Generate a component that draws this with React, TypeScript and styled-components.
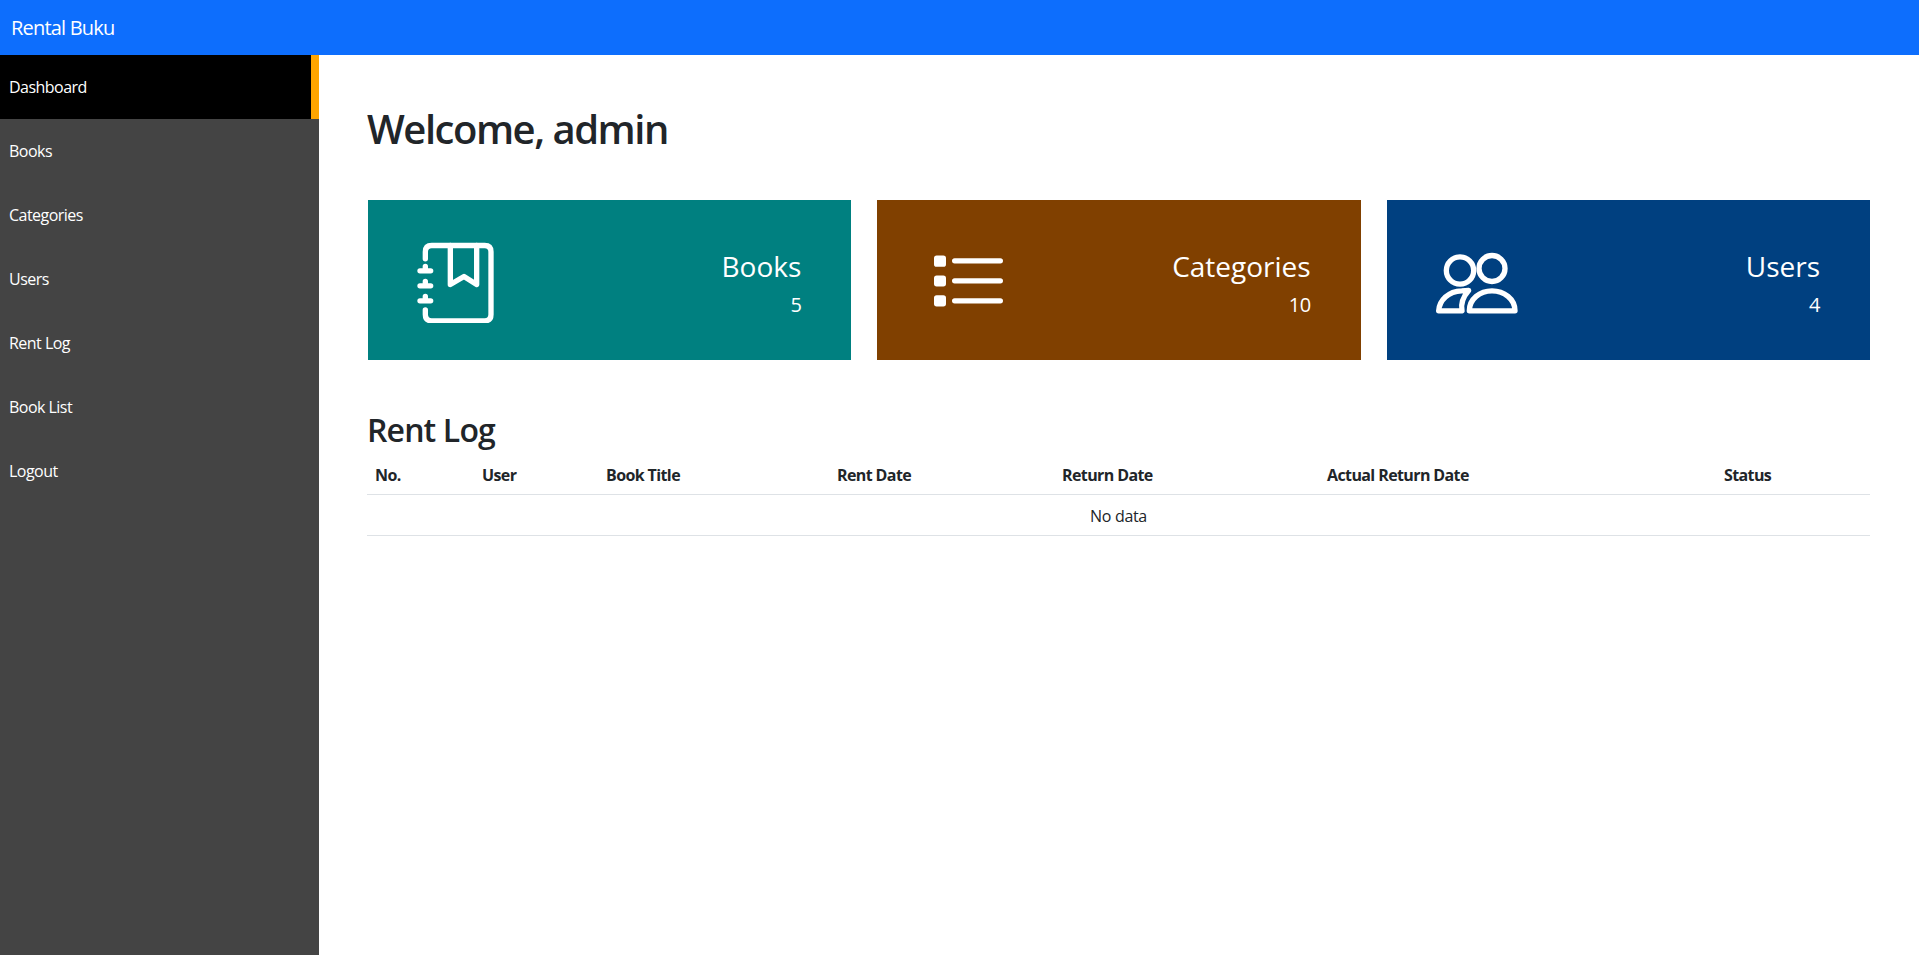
import React from "react";
import styled, { createGlobalStyle } from "styled-components";

const GlobalStyle = createGlobalStyle`
  html, body { margin: 0; padding: 0; background: #fff; }
  body {
    font-family: "Open Sans", "Noto Sans", "Liberation Sans", sans-serif;
    font-size: 16px;
    line-height: 1.5;
    color: #212529;
    letter-spacing: -0.033em;
  }
  * { box-sizing: border-box; }
`;

const Page = styled.div`
  display: flex;
  flex-direction: column;
  height: 955px;
  overflow: hidden;
`;

const Navbar = styled.header`
  flex: 0 0 55px;
  display: flex;
  align-items: center;
  padding-left: 11px;
  background: #0d6efd;
`;

const Brand = styled.a`
  font-size: 20px;
  letter-spacing: -0.04em;
  color: #fff;
`;

const Body = styled.div`
  flex: 1;
  display: flex;
  min-height: 0;
`;

const Sidebar = styled.nav`
  flex: 0 0 319px;
  background: #444444;
`;

const NavItem = styled.a<{ $active?: boolean }>`
  display: flex;
  align-items: center;
  height: 64px;
  padding-left: 9px;
  color: #fff;
  background: ${(p) => (p.$active ? "#000" : "transparent")};
  border-right: 8px solid ${(p) => (p.$active ? "orange" : "transparent")};
`;

const Main = styled.main`
  flex: 1;
  min-width: 0;
  padding: 50px 49px 0;
`;

const Title = styled.h1`
  margin: 0 0 47px -1px;
  font-size: 40px;
  line-height: 48px;
  font-weight: 600;
  letter-spacing: -0.037em;
`;

const Cards = styled.section`
  display: grid;
  grid-template-columns: repeat(3, 1fr);
  gap: 26px;
  margin-bottom: 51px;
`;

const Card = styled.article<{ $bg: string }>`
  display: flex;
  align-items: center;
  justify-content: space-between;
  height: 160px;
  padding: 0 50px 0 47px;
  color: #fff;
  background: ${(p) => p.$bg};
`;

const CardIcon = styled.svg`
  display: block;
  width: 85px;
  height: 85px;
  fill: none;
  stroke: #fff;
  stroke-width: 16;
  stroke-linecap: round;
  stroke-linejoin: round;
`;

const CardText = styled.div`
  padding-top: 5px;
  text-align: right;
`;

const CardTitle = styled.div`
  margin-bottom: 3px;
  font-size: 28px;
  line-height: 42px;
  letter-spacing: 0;
`;

const CardCount = styled.div`
  font-size: 20px;
  line-height: 30px;
`;

const SubTitle = styled.h2`
  margin: 0 0 5px -1px;
  font-size: 32px;
  line-height: 38.4px;
  font-weight: 600;
  letter-spacing: -0.027em;
`;

const Table = styled.table`
  width: calc(100% + 1px);
  margin-left: -1px;
  border-collapse: collapse;
  table-layout: fixed;
`;

const Col = styled.col<{ $w: number }>`
  width: ${(p) => p.$w}px;
`;

const Th = styled.th`
  padding: 9px 8px 7px;
  text-align: left;
  font-weight: 700;
  letter-spacing: -0.038em;
  border-bottom: 1px solid #dee2e6;
`;

const Td = styled.td`
  padding: 9px 8px 7px;
  text-align: center;
  letter-spacing: -0.02em;
  border-bottom: 1px solid #dee2e6;
`;

const BookIcon = () => (
  <CardIcon viewBox="165 142.5 255 255">
    <path d="M196 205 V184 Q196 165 215 165 H374 Q393 165 393 184 V372 Q393 391 374 391 H215 Q196 391 196 372 V358" />
    <path d="M271 165 V282 L312 258 L350 282 V165" />
    <path d="M180 241 H212 M196 228 V241 M180 286 H212 M196 273 V286 M180 331 H212 M196 318 V331" />
  </CardIcon>
);

const ListIcon = () => (
  <CardIcon viewBox="162 142.5 255 255">
    <path d="M200 203 H220 V221 H200 Z M200 263 H220 V280 H200 Z M200 322 H220 V340 H200 Z" fill="#fff" />
    <path d="M254 211 H391 M254 271 H391 M254 331 H391" />
  </CardIcon>
);

const UsersIcon = () => (
  <CardIcon viewBox="162 142.5 255 255">
    <circle cx="240" cy="240" r="41" />
    <circle cx="336" cy="234" r="39" />
    <path d="M268 361 C268 325 300 301 336 301 C372 301 405 325 405 361 Z" />
    <path d="M176 361 C178 330 205 302 245 301 L266 300 C250 318 242 340 246 361 Z" />
  </CardIcon>
);

const navItems = ["Dashboard", "Books", "Categories", "Users", "Rent Log", "Book List", "Logout"];
const columns: [string, number][] = [
  ["No.", 107],
  ["User", 124],
  ["Book Title", 231],
  ["Rent Date", 225],
  ["Return Date", 265],
  ["Actual Return Date", 397],
  ["Status", 154],
];
const cards = [
  { label: "Books", count: 5, bg: "#008080", icon: <BookIcon /> },
  { label: "Categories", count: 10, bg: "#804000", icon: <ListIcon /> },
  { label: "Users", count: 4, bg: "#004080", icon: <UsersIcon /> },
];

export default function App() {
  return (
    <Page>
      <GlobalStyle />
      <Navbar>
        <Brand>Rental Buku</Brand>
      </Navbar>
      <Body>
        <Sidebar>
          {navItems.map((item, i) => (
            <NavItem key={item} $active={i === 0}>
              {item}
            </NavItem>
          ))}
        </Sidebar>
        <Main>
          <Title>Welcome, admin</Title>
          <Cards>
            {cards.map((c) => (
              <Card key={c.label} $bg={c.bg}>
                {c.icon}
                <CardText>
                  <CardTitle>{c.label}</CardTitle>
                  <CardCount>{c.count}</CardCount>
                </CardText>
              </Card>
            ))}
          </Cards>
          <SubTitle>Rent Log</SubTitle>
          <Table>
            <colgroup>
              {columns.map(([name, w]) => (
                <Col key={name} $w={w} />
              ))}
            </colgroup>
            <thead>
              <tr>
                {columns.map(([name]) => (
                  <Th key={name}>{name}</Th>
                ))}
              </tr>
            </thead>
            <tbody>
              <tr>
                <Td colSpan={7}>No data</Td>
              </tr>
            </tbody>
          </Table>
        </Main>
      </Body>
    </Page>
  );
}
